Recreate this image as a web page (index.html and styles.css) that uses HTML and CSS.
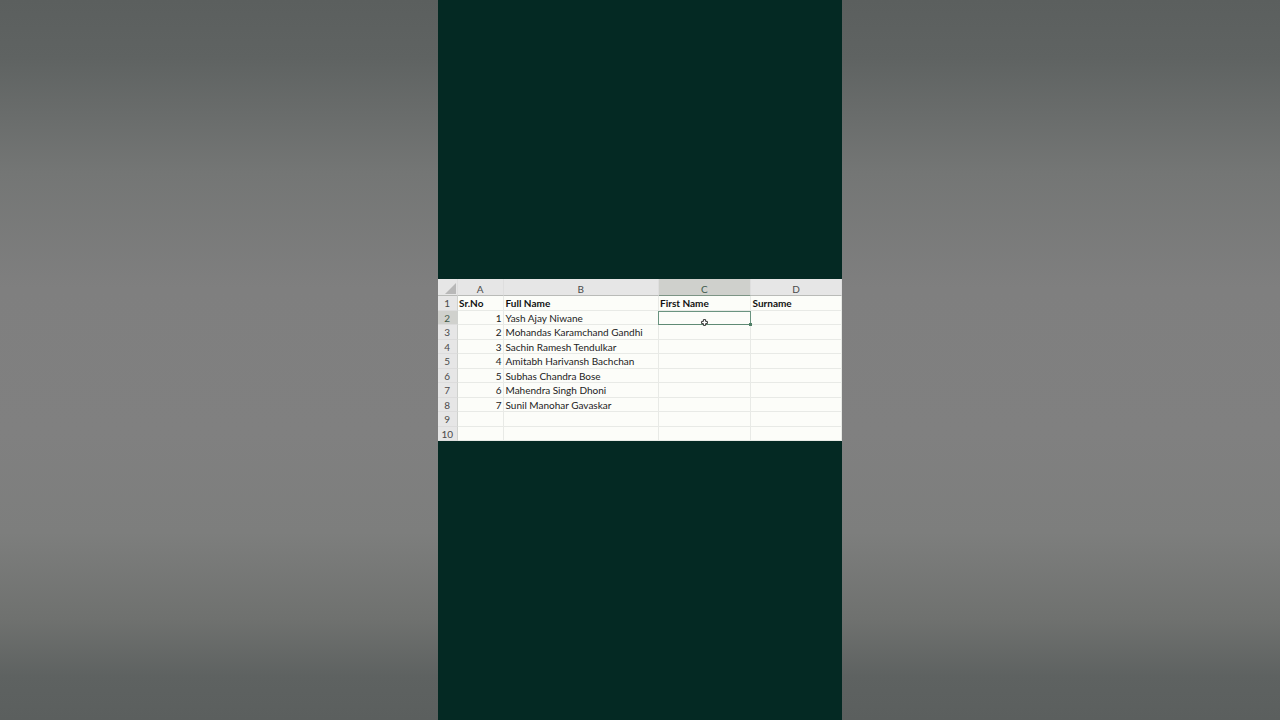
FILE: index.html
```html
<!DOCTYPE html>
<html lang="en">
<head>
<meta charset="utf-8">
<title>Excel sheet</title>
<link rel="stylesheet" href="styles.css">
</head>
<body>
<div class="page">
  <div class="side"></div>
  <main class="center">
    <div class="sheet">
      <div class="hd corner"><svg class="tri" viewBox="0 0 11 11"><path d="M11 0V11H0Z"/></svg></div>
      <div class="hd">A</div><div class="hd">B</div><div class="hd sel">C</div><div class="hd">D</div>

      <div class="rh">1</div><div class="c b">Sr.No</div><div class="c b">Full Name</div><div class="c b">First Name</div><div class="c b">Surname</div>
      <div class="rh on">2</div><div class="c n">1</div><div class="c">Yash Ajay Niwane</div>
      <div class="c active"><svg class="cursor" viewBox="0 0 7 7"><path d="M2.4.6h2.2v1.8h1.8v2.2H4.6v1.8H2.4V4.6H.6V2.4h1.8Z"/></svg></div><div class="c"></div>
      <div class="rh">3</div><div class="c n">2</div><div class="c">Mohandas Karamchand Gandhi</div><div class="c"></div><div class="c"></div>
      <div class="rh">4</div><div class="c n">3</div><div class="c">Sachin Ramesh Tendulkar</div><div class="c"></div><div class="c"></div>
      <div class="rh">5</div><div class="c n">4</div><div class="c">Amitabh Harivansh Bachchan</div><div class="c"></div><div class="c"></div>
      <div class="rh">6</div><div class="c n">5</div><div class="c">Subhas Chandra Bose</div><div class="c"></div><div class="c"></div>
      <div class="rh">7</div><div class="c n">6</div><div class="c">Mahendra Singh Dhoni</div><div class="c"></div><div class="c"></div>
      <div class="rh">8</div><div class="c n">7</div><div class="c">Sunil Manohar Gavaskar</div><div class="c"></div><div class="c"></div>
      <div class="rh">9</div><div class="c"></div><div class="c"></div><div class="c"></div><div class="c"></div>
      <div class="rh">10</div><div class="c"></div><div class="c"></div><div class="c"></div><div class="c"></div>
    </div>
  </main>
  <div class="side"></div>
</div>
</body>
</html>
```
FILE: styles.css
```css
* { box-sizing: border-box; }
html, body { margin: 0; height: 100%; }
body { font-family: Lato, "Open Sans", sans-serif; overflow: hidden; }
.page { display: flex; height: 720px; width: 1280px; }
.side {
  flex: 0 0 438px;
  background: linear-gradient(180deg, #5b5f5e 0%, #5f6362 8%, #747675 24%, #7f7f7f 40%, #808080 60%, #7d7e7d 74%, #6f716f 86%, #5e6261 94%, #5b5f5e 100%);
}
.center {
  flex: 0 0 404px;
  background: #042923;
  display: flex;
  flex-direction: column;
  justify-content: center;
}
.sheet {
  display: grid;
  grid-template-columns: 19.5px 46.5px 154.5px 92.5px 91px;
  grid-template-rows: 17px repeat(10, 14.5px);
  height: 162px;
  background: #fcfdf9;
  color: #222;
  font-size: 10px;
  line-height: 14px;
}
.hd {
  background: #e6e6e6;
  border-bottom: 1px solid #b9bbb8;
  border-right: 1px solid #dedede;
  text-align: center;
  color: #4a4a4a;
  font-size: 10px;
  line-height: 20px;
}
.hd.sel { background: #cfd0cc; border-bottom: 1px solid #7d9485; color: #3f5a4a; }
.corner { position: relative; }
.tri { position: absolute; right: 1px; bottom: 1px; width: 11px; height: 11px; fill: #b8b8b8; }
.rh {
  background: #e6e6e6;
  border-right: 1px solid #cfd1ce;
  border-bottom: 1px solid #dcdcdc;
  text-align: center;
  color: #4a4a4a;
  line-height: 14px;
}
.rh.on { background: #d0d1cd; color: #3f5a4a; }
.c {
  border-right: 1px solid #e8eae6;
  border-bottom: 1px solid #e8eae6;
  padding: 0 1.5px;
  white-space: nowrap;
  line-height: 14px;
}
.b { font-weight: 700; color: #111; }
.n { text-align: right; }
.active {
  position: relative;
  margin-left: -0.5px;
  border: 1px solid #6a9480;
  border-bottom: 1.5px solid #5f8a74;
}
.active::after {
  content: "";
  position: absolute;
  right: -2px;
  bottom: -2px;
  width: 3px;
  height: 3px;
  background: #4f7f66;
}
.cursor {
  position: absolute;
  left: 41.5px;
  top: 7px;
  width: 7px;
  height: 7px;
  fill: #fff;
  stroke: #333;
  stroke-width: 1;
}
```
